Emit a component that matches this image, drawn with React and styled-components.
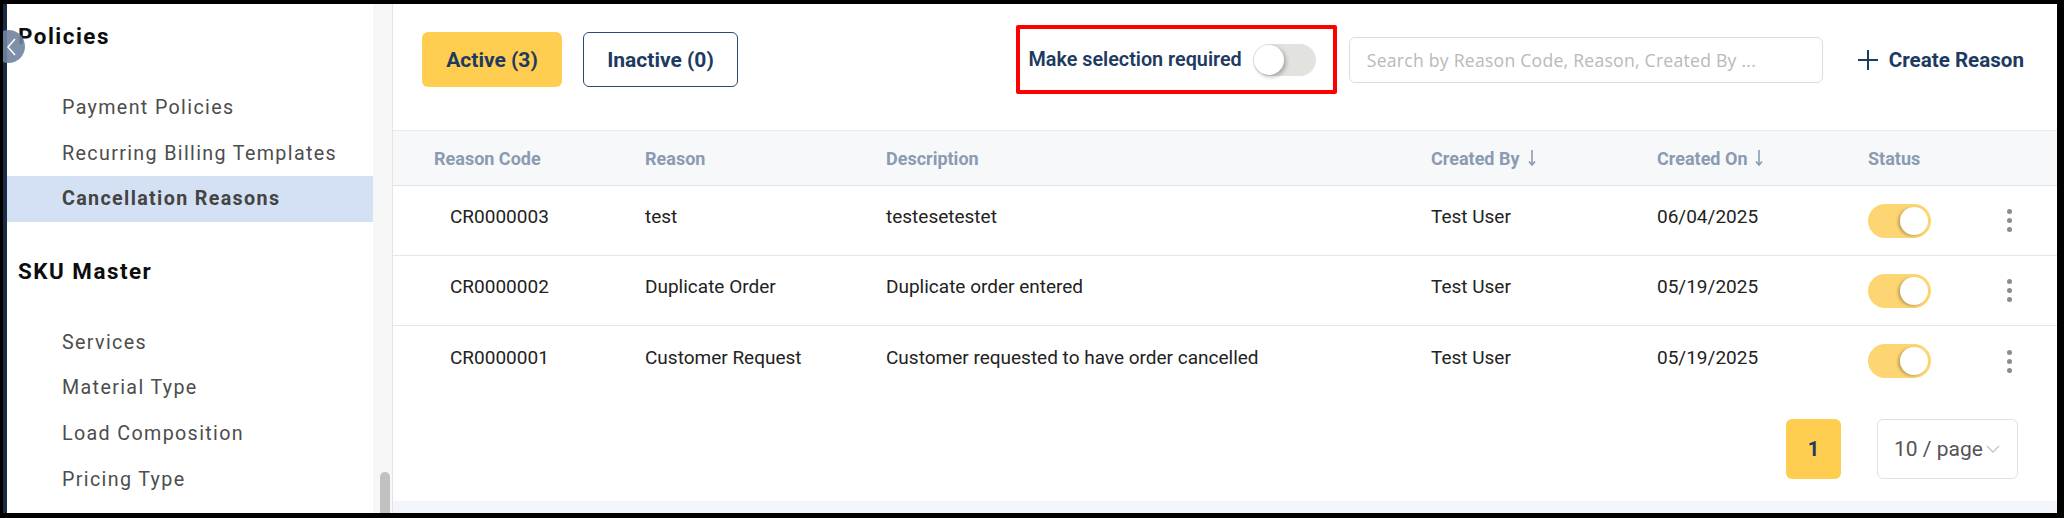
import React from 'react'
import styled, { createGlobalStyle } from 'styled-components'

const GlobalStyle = createGlobalStyle`
  html, body {
    margin: 0;
    padding: 0;
    background: #000;
  }
  body {
    font-family: Roboto, "Liberation Sans", sans-serif;
  }
  * {
    box-sizing: border-box;
  }
`

const navy = '#1d3a60'
const yellow = '#ffcd4f'

const Frame = styled.div`
  position: relative;
  display: flex;
  width: 2064px;
  height: 518px;
  border-style: solid;
  border-color: #000;
  border-width: 4px 7px 5px 3px;
  background: #fff;
  overflow: hidden;
`

const CollapseButton = styled.div`
  position: absolute;
  left: -11px;
  top: 26px;
  width: 33px;
  height: 33px;
  border-radius: 50%;
  background: rgba(112, 132, 160, 0.9);
  display: flex;
  align-items: center;
  justify-content: flex-end;
  padding-right: 9px;
  z-index: 2;
`

const Sidebar = styled.aside`
  width: 370px;
  flex-shrink: 0;
  border-left: 4px solid #1b2b46;
  padding-top: 17px;
  background: #fff;
`

const Section = styled.div`
  margin-bottom: 34px;
`

const SectionTitle = styled.h3`
  margin: 0 0 34px;
  padding-left: 11px;
  font-size: 22.4px;
  line-height: 30px;
  font-weight: 700;
  letter-spacing: 1.5px;
  color: #0d0d0d;
`

const MenuItem = styled.div`
  height: 45.6px;
  line-height: 45.6px;
  padding-left: 55px;
  font-size: 19.7px;
  letter-spacing: 1.35px;
  font-weight: ${p => (p.$active ? 700 : 400)};
  color: ${p => (p.$active ? '#444' : '#4d4d4d')};
  background: ${p => (p.$active ? '#d4e1f5' : 'transparent')};
`

const ScrollTrack = styled.div`
  width: 20px;
  flex-shrink: 0;
  background: #f7f7f7;
  border-right: 1px solid #e4e4e4;
  display: flex;
  flex-direction: column;
  justify-content: flex-end;
  padding-left: 7px;
`

const ScrollThumb = styled.div`
  width: 10px;
  height: 41px;
  border-radius: 5px 5px 0 0;
  background: #c1c1c1;
`

const Main = styled.main`
  flex: 1;
  display: flex;
  flex-direction: column;
  min-width: 0;
`

const Toolbar = styled.div`
  display: flex;
  align-items: center;
  height: 127px;
  flex-shrink: 0;
  padding: 28px 33px 43px 29px;
  border-bottom: 1px solid #e6e9ee;
`

const Tabs = styled.div`
  display: flex;
  gap: 21px;
`

const TabButton = styled.button`
  height: 55px;
  width: ${p => p.$width}px;
  border-radius: 6px;
  border: ${p => (p.$active ? 'none' : `1.5px solid #2b4a72`)};
  background: ${p => (p.$active ? yellow : '#fff')};
  color: ${navy};
  font-family: Roboto, "Liberation Sans", sans-serif;
  font-size: 21px;
  font-weight: 700;
  cursor: pointer;
`

const Spacer = styled.div`
  flex: 1;
`

const Highlight = styled.div`
  display: flex;
  align-items: center;
  gap: 11px;
  height: 69px;
  padding: 0 17px 0 8px;
  border: 4px solid #ff0000;
  border-radius: 2px;
`

const ToggleLabel = styled.span`
  font-size: 19.8px;
  font-weight: 600;
  color: ${navy};
`

const Switch = styled.div`
  flex-shrink: 0;
  width: 63px;
  height: ${p => (p.$on ? 34 : 32)}px;
  border-radius: 17px;
  background: ${p => (p.$on ? '#fdd673' : '#e2e2de')};
  display: flex;
  align-items: center;
  justify-content: ${p => (p.$on ? 'flex-end' : 'flex-start')};
  padding: 0 ${p => (p.$on ? 3 : 1)}px;
`

const Knob = styled.div`
  width: ${p => (p.$on ? 28 : 30)}px;
  height: ${p => (p.$on ? 28 : 30)}px;
  border-radius: 50%;
  background: #fff;
  box-shadow: ${p => (p.$on ? '-2px 1px 3px rgba(0,0,0,0.25)' : '2px 2px 4px rgba(0,0,0,0.28)')};
`

const Search = styled.input`
  width: 474px;
  height: 46px;
  margin-left: 12px;
  padding: 0 17px;
  border: 1px solid #dcdcdc;
  border-radius: 6px;
  font-family: "Open Sans", sans-serif;
  font-size: 17.6px;
  letter-spacing: 0.25px;
  color: #333;
  outline: none;
  &::placeholder {
    color: #b9b9b9;
  }
`

const CreateButton = styled.button`
  display: flex;
  align-items: center;
  gap: 10px;
  margin-left: 34px;
  padding: 0;
  border: none;
  background: none;
  color: ${navy};
  font-family: Roboto, "Liberation Sans", sans-serif;
  font-size: 20.6px;
  font-weight: 700;
  cursor: pointer;
`

const cols = '211px 241px 545px 226px 211px 137px 1fr'

const HeadRow = styled.div`
  display: grid;
  grid-template-columns: ${cols};
  align-items: center;
  height: 55px;
  flex-shrink: 0;
  padding-left: 41px;
  background: #f7f8fa;
  border-bottom: 1px solid #dde2e8;
`

const HeadCell = styled.div`
  display: flex;
  align-items: center;
  gap: 7px;
  font-size: 18px;
  font-weight: 700;
  color: #8a9bb2;
`

const Row = styled.div`
  display: grid;
  grid-template-columns: ${cols};
  align-items: center;
  height: 70px;
  flex-shrink: 0;
  padding-left: 41px;
  border-bottom: 1px solid #e3e7ec;
  &:last-child {
    border-bottom: none;
  }
`

const Cell = styled.div`
  padding-left: ${p => (p.$indent ? 16 : 0)}px;
  padding-bottom: 8px;
  font-size: 19px;
  color: #222;
  white-space: nowrap;
`

const Kebab = styled.div`
  display: flex;
  flex-direction: column;
  gap: 4px;
  margin-left: 2px;
  span {
    width: 5px;
    height: 5px;
    border-radius: 50%;
    background: #8c8c8c;
  }
`

const Pagination = styled.div`
  flex: 1;
  display: flex;
  justify-content: flex-end;
  align-items: flex-start;
  gap: 36px;
  padding: 23px 39px 0 0;
`

const PageNumber = styled.div`
  width: 55px;
  height: 60px;
  border-radius: 6px;
  background: ${yellow};
  display: flex;
  align-items: center;
  justify-content: center;
  font-size: 20px;
  font-weight: 700;
  color: ${navy};
`

const PageSize = styled.div`
  width: 141px;
  height: 60px;
  border-radius: 6px;
  border: 1px solid #dde1e6;
  display: flex;
  align-items: center;
  gap: 3px;
  padding-left: 16px;
  font-size: 21px;
  color: #555;
`

const BottomStrip = styled.div`
  height: 12px;
  flex-shrink: 0;
  background: #f2f5fa;
`

const SortArrow = () => (
  <svg width="10" height="18" viewBox="0 0 10 18" fill="none" stroke="#8a9bb2" strokeWidth="1.6">
    <path d="M5 1v15" />
    <path d="M2 12.5 5 16l3-3.5" />
  </svg>
)

const rows = [
  { code: 'CR0000003', reason: 'test', desc: 'testesetestet', by: 'Test User', on: '06/04/2025' },
  { code: 'CR0000002', reason: 'Duplicate Order', desc: 'Duplicate order entered', by: 'Test User', on: '05/19/2025' },
  { code: 'CR0000001', reason: 'Customer Request', desc: 'Customer requested to have order cancelled', by: 'Test User', on: '05/19/2025' },
]

const App = () => {
  return (
    <>
      <GlobalStyle />
      <Frame>
        <CollapseButton>
          <svg width="9" height="18" viewBox="0 0 9 18" fill="none" stroke="#fff" strokeWidth="1.5">
            <path d="M8 1 1 9l7 8" />
          </svg>
        </CollapseButton>

        <Sidebar>
          <Section>
            <SectionTitle>Policies</SectionTitle>
            <MenuItem>Payment Policies</MenuItem>
            <MenuItem>Recurring Billing Templates</MenuItem>
            <MenuItem $active>Cancellation Reasons</MenuItem>
          </Section>
          <Section>
            <SectionTitle>SKU Master</SectionTitle>
            <MenuItem>Services</MenuItem>
            <MenuItem>Material Type</MenuItem>
            <MenuItem>Load Composition</MenuItem>
            <MenuItem>Pricing Type</MenuItem>
          </Section>
        </Sidebar>
        <ScrollTrack>
          <ScrollThumb />
        </ScrollTrack>

        <Main>
          <Toolbar>
            <Tabs>
              <TabButton $active $width={140}>Active (3)</TabButton>
              <TabButton $width={155}>Inactive (0)</TabButton>
            </Tabs>
            <Spacer />
            <Highlight>
              <ToggleLabel>Make selection required</ToggleLabel>
              <Switch>
                <Knob />
              </Switch>
            </Highlight>
            <Search placeholder="Search by Reason Code, Reason, Created By ..." />
            <CreateButton>
              <svg width="22" height="22" viewBox="0 0 22 22" fill="none" stroke={navy} strokeWidth="2">
                <path d="M11 1v20M1 11h20" />
              </svg>
              Create Reason
            </CreateButton>
          </Toolbar>

          <HeadRow>
            <HeadCell>Reason Code</HeadCell>
            <HeadCell>Reason</HeadCell>
            <HeadCell>Description</HeadCell>
            <HeadCell>Created By <SortArrow /></HeadCell>
            <HeadCell>Created On <SortArrow /></HeadCell>
            <HeadCell>Status</HeadCell>
            <HeadCell />
          </HeadRow>

          <div>
            {rows.map(r => (
              <Row key={r.code}>
                <Cell $indent>{r.code}</Cell>
                <Cell>{r.reason}</Cell>
                <Cell>{r.desc}</Cell>
                <Cell>{r.by}</Cell>
                <Cell>{r.on}</Cell>
                <Switch $on>
                  <Knob $on />
                </Switch>
                <Kebab>
                  <span />
                  <span />
                  <span />
                </Kebab>
              </Row>
            ))}
          </div>

          <Pagination>
            <PageNumber>1</PageNumber>
            <PageSize>
              10 / page
              <svg width="14" height="10" viewBox="0 0 14 10" fill="none" stroke="#c4c4c4" strokeWidth="1.3">
                <path d="M1 2l6 6 6-6" />
              </svg>
            </PageSize>
          </Pagination>
          <BottomStrip />
        </Main>
      </Frame>
    </>
  )
}

export default App
